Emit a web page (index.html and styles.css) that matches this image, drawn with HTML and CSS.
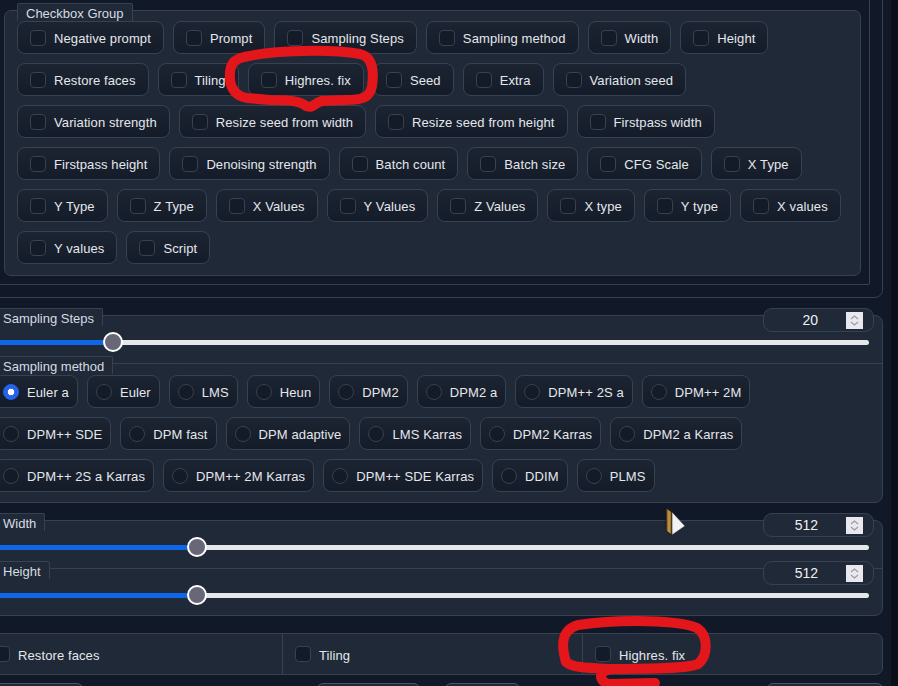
FILE: index.html
```html
<!DOCTYPE html>
<html lang="en">
<head>
    <meta charset="UTF-8">
    <meta name="viewport" content="width=device-width, initial-scale=1.0">
    <title>txt2img settings</title>
    <link rel="stylesheet" href="styles.css">
</head>
<body>
    <div class="app">

        <!-- Bloque superior: grupo de checkboxes -->
        <div class="top-area">
            <div class="panel-mid">
                <div class="block group">
                    <span class="block-label">Checkbox Group</span>
                    <div class="item-rows">
                        <div class="item-row">
                            <label class="check-item"><input type="checkbox"><span>Negative prompt</span></label>
                            <label class="check-item"><input type="checkbox"><span>Prompt</span></label>
                            <label class="check-item"><input type="checkbox"><span>Sampling Steps</span></label>
                            <label class="check-item"><input type="checkbox"><span>Sampling method</span></label>
                            <label class="check-item"><input type="checkbox"><span>Width</span></label>
                            <label class="check-item"><input type="checkbox"><span>Height</span></label>
                        </div>
                        <div class="item-row">
                            <label class="check-item"><input type="checkbox"><span>Restore faces</span></label>
                            <label class="check-item"><input type="checkbox"><span>Tiling</span></label>
                            <label class="check-item"><input type="checkbox"><span>Highres. fix</span></label>
                            <label class="check-item"><input type="checkbox"><span>Seed</span></label>
                            <label class="check-item"><input type="checkbox"><span>Extra</span></label>
                            <label class="check-item"><input type="checkbox"><span>Variation seed</span></label>
                        </div>
                        <div class="item-row">
                            <label class="check-item"><input type="checkbox"><span>Variation strength</span></label>
                            <label class="check-item"><input type="checkbox"><span>Resize seed from width</span></label>
                            <label class="check-item"><input type="checkbox"><span>Resize seed from height</span></label>
                            <label class="check-item"><input type="checkbox"><span>Firstpass width</span></label>
                        </div>
                        <div class="item-row">
                            <label class="check-item"><input type="checkbox"><span>Firstpass height</span></label>
                            <label class="check-item"><input type="checkbox"><span>Denoising strength</span></label>
                            <label class="check-item"><input type="checkbox"><span>Batch count</span></label>
                            <label class="check-item"><input type="checkbox"><span>Batch size</span></label>
                            <label class="check-item"><input type="checkbox"><span>CFG Scale</span></label>
                            <label class="check-item"><input type="checkbox"><span>X Type</span></label>
                        </div>
                        <div class="item-row">
                            <label class="check-item"><input type="checkbox"><span>Y Type</span></label>
                            <label class="check-item"><input type="checkbox"><span>Z Type</span></label>
                            <label class="check-item"><input type="checkbox"><span>X Values</span></label>
                            <label class="check-item"><input type="checkbox"><span>Y Values</span></label>
                            <label class="check-item"><input type="checkbox"><span>Z Values</span></label>
                            <label class="check-item"><input type="checkbox"><span>X type</span></label>
                            <label class="check-item"><input type="checkbox"><span>Y type</span></label>
                            <label class="check-item"><input type="checkbox"><span>X values</span></label>
                        </div>
                        <div class="item-row">
                            <label class="check-item"><input type="checkbox"><span>Y values</span></label>
                            <label class="check-item"><input type="checkbox"><span>Script</span></label>
                        </div>
                    </div>
                </div>
            </div>
        </div>

        <!-- Parte inferior: sliders y sampler -->
        <div class="lower">
            <div class="block stack">
                <div class="field slider-field">
                    <span class="block-label">Sampling Steps</span>
                    <div class="number-box"><span>20</span><i class="spinner"></i></div>
                    <div class="slider" style="--v: 14.8%"><div class="thumb"></div></div>
                </div>
                <div class="field radio-field">
                    <span class="block-label">Sampling method</span>
                    <div class="item-rows">
                        <div class="item-row">
                            <label class="radio-item"><input type="radio" name="sampler" checked><span>Euler a</span></label>
                            <label class="radio-item"><input type="radio" name="sampler"><span>Euler</span></label>
                            <label class="radio-item"><input type="radio" name="sampler"><span>LMS</span></label>
                            <label class="radio-item"><input type="radio" name="sampler"><span>Heun</span></label>
                            <label class="radio-item"><input type="radio" name="sampler"><span>DPM2</span></label>
                            <label class="radio-item"><input type="radio" name="sampler"><span>DPM2 a</span></label>
                            <label class="radio-item"><input type="radio" name="sampler"><span>DPM++ 2S a</span></label>
                            <label class="radio-item"><input type="radio" name="sampler"><span>DPM++ 2M</span></label>
                        </div>
                        <div class="item-row">
                            <label class="radio-item"><input type="radio" name="sampler"><span>DPM++ SDE</span></label>
                            <label class="radio-item"><input type="radio" name="sampler"><span>DPM fast</span></label>
                            <label class="radio-item"><input type="radio" name="sampler"><span>DPM adaptive</span></label>
                            <label class="radio-item"><input type="radio" name="sampler"><span>LMS Karras</span></label>
                            <label class="radio-item"><input type="radio" name="sampler"><span>DPM2 Karras</span></label>
                            <label class="radio-item"><input type="radio" name="sampler"><span>DPM2 a Karras</span></label>
                        </div>
                        <div class="item-row">
                            <label class="radio-item"><input type="radio" name="sampler"><span>DPM++ 2S a Karras</span></label>
                            <label class="radio-item"><input type="radio" name="sampler"><span>DPM++ 2M Karras</span></label>
                            <label class="radio-item"><input type="radio" name="sampler"><span>DPM++ SDE Karras</span></label>
                            <label class="radio-item"><input type="radio" name="sampler"><span>DDIM</span></label>
                            <label class="radio-item"><input type="radio" name="sampler"><span>PLMS</span></label>
                        </div>
                    </div>
                </div>
            </div>

            <div class="block stack">
                <div class="field slider-field">
                    <span class="block-label">Width</span>
                    <div class="number-box"><span>512</span><i class="spinner"></i></div>
                    <div class="slider" style="--v: 24.2%"><div class="thumb"></div></div>
                </div>
                <div class="field slider-field">
                    <span class="block-label">Height</span>
                    <div class="number-box"><span>512</span><i class="spinner"></i></div>
                    <div class="slider" style="--v: 24.2%"><div class="thumb"></div></div>
                </div>
            </div>

            <div class="block options">
                <label class="option-cell"><input type="checkbox"><span>Restore faces</span></label>
                <label class="option-cell"><input type="checkbox"><span>Tiling</span></label>
                <label class="option-cell"><input type="checkbox"><span>Highres. fix</span></label>
            </div>

            <div class="more-row">
                <div class="more-btn first"></div>
                <div class="more-btn second"></div>
                <div class="more-btn third"></div>
                <div class="more-btn fourth"></div>
            </div>
        </div>

        <!-- Marcas rojas dibujadas encima -->
        <svg class="marks" width="898" height="686" viewBox="0 0 898 686">
            <path d="M244 57 C275 50 330 49 360 54 C373 57 374 72 372 86 C370 98 362 100 345 100 L322 101 C313 103 314 109 306 106 C300 101 290 100 270 100 L247 98 C233 96 229 85 230 72 C231 62 236 59 244 57 Z"/>
            <path d="M566 662 C561 645 561 630 578 625 C620 619 680 620 697 628 C709 636 708 656 698 664 C682 670 640 668 612 669 C598 671 598 680 608 684 L655 683 M612 669 C590 668 572 668 566 662"/>
        </svg>

        <!-- Puntero del ratón -->
        <svg class="cursor" width="24" height="32" viewBox="0 0 24 32">
            <defs>
                <linearGradient id="gold" x1="0" x2="1">
                    <stop offset="0" stop-color="#5a3d12"/>
                    <stop offset="0.5" stop-color="#c9a04a"/>
                    <stop offset="1" stop-color="#6b4a17"/>
                </linearGradient>
            </defs>
            <polygon points="2,1 8,5 8,28 2,24" fill="url(#gold)" stroke="#1a1208" stroke-width="0.8"/>
            <polygon points="8,5 21,19 8,28" fill="#f2f2f2" stroke="#2a2a2a" stroke-width="0.6"/>
        </svg>
    </div>
</body>
</html>
```
FILE: styles.css
```css
* {
    box-sizing: border-box;
}

html, body {
    margin: 0;
    height: 100%;
    overflow: hidden;
}

body {
    background-color: #0b0f19;
    font-family: 'Liberation Sans', Arial, sans-serif;
    font-size: 13px;
    color: #e5e7eb;
}

.app {
    position: relative;
    width: 891px;
    height: 686px;
    overflow: hidden;
    background-color: #111827;
}

/* Contenedores anidados de arriba */
.top-area {
    margin: -24px 0 0 -20px;
    width: 903px;
    padding: 12px;
    border: 1px solid #374151;
    border-radius: 8px;
}

.panel-mid {
    padding: 20px 8px 8px 10px;
    border: 1px solid #374151;
    border-radius: 2px;
}

.block {
    position: relative;
    background-color: #1f2937;
    border: 1px solid #374151;
    border-radius: 7px;
}

.group {
    padding: 10px 12px 11px;
}

/* Etiqueta tipo pestaña */
.block-label {
    position: absolute;
    top: -8px;
    left: 12px;
    z-index: 2;
    padding: 2px 8px 0;
    line-height: 16px;
    height: 18px;
    color: #d7dbe2;
    background-color: #1f2937;
    border: 1px solid #374151;
    border-bottom: none;
    border-radius: 2px 2px 0 0;
}

.item-rows {
    display: flex;
    flex-direction: column;
    gap: 9px;
}

.item-row {
    display: flex;
    gap: 9px;
}

.check-item,
.radio-item {
    display: flex;
    align-items: center;
    gap: 8px;
    height: 33px;
    padding: 0 12px;
    white-space: nowrap;
    border: 1px solid #374151;
    border-radius: 8px;
    background: linear-gradient(180deg, #1c2432 0%, #141b29 100%);
}

.check-item span,
.radio-item span,
.option-cell span {
    position: relative;
    top: 1px;
    letter-spacing: 0.1px;
}

.radio-item {
    padding: 0 8px;
}

input[type="checkbox"],
input[type="radio"] {
    -webkit-appearance: none;
    appearance: none;
    flex: none;
    width: 16px;
    height: 16px;
    margin: 0;
    border: 1px solid #374151;
    border-radius: 4px;
    background-color: #131a28;
}

input[type="radio"] {
    border-radius: 50%;
}

input[type="radio"]:checked {
    border-color: #2563eb;
    background: radial-gradient(circle, #ffffff 0 3px, #2563eb 3.6px);
}

/* Parte inferior */
.lower {
    margin: 17px 0 0 -19px;
    width: 902px;
}

.lower .block + .block {
    margin-top: 17px;
}

.lower .options {
    margin-top: 16px;
}

.stack {
    border-radius: 8px;
}

.field {
    position: relative;
}

.field + .field {
    border-top: 1px solid #374151;
}

.slider-field {
    height: 47px;
    padding: 16px 13px 0 0;
}

.radio-field {
    padding: 11px 12px 10px;
}

/* Caja numérica */
.number-box {
    position: absolute;
    top: -8px;
    right: 8px;
    z-index: 2;
    display: flex;
    align-items: center;
    justify-content: flex-end;
    width: 111px;
    height: 24px;
    padding-right: 10px;
    font-size: 14px;
    color: #eef0f3;
    background-color: #1f2937;
    border: 1px solid #374151;
    border-radius: 9px;
}

.number-box span {
    margin-right: 28px;
}

.spinner {
    width: 17px;
    height: 17px;
    background-color: #e8e8ee;
    background-image: url("data:image/svg+xml,%3Csvg xmlns='http://www.w3.org/2000/svg' width='17' height='17'%3E%3Cpath d='M5 7 L8.5 4 L12 7 M5 10 L8.5 13 L12 10' fill='none' stroke='%239a9aa6' stroke-width='1.2'/%3E%3C/svg%3E");
}

/* Slider */
.slider {
    position: relative;
    height: 20px;
}

.slider::before {
    content: '';
    position: absolute;
    left: 0;
    right: 0;
    top: 8px;
    height: 5px;
    border-radius: 3px;
    background: linear-gradient(to right, #0f66e6 var(--v), #e5e7eb var(--v));
}

.thumb {
    position: absolute;
    top: 0;
    left: var(--v);
    width: 20px;
    height: 20px;
    margin-left: -10px;
    border: 2px solid #ffffff;
    border-radius: 50%;
    background-color: #676777;
}

/* Fila de opciones */
.options {
    display: grid;
    grid-template-columns: repeat(3, 1fr);
    height: 42px;
}

.option-cell {
    display: flex;
    align-items: center;
    gap: 8px;
    padding-left: 12px;
}

.option-cell + .option-cell {
    border-left: 1px solid #374151;
}

.more-row {
    display: flex;
    margin-top: 8px;
}

.more-btn {
    height: 12px;
    background-color: #1f2937;
    border: 1px solid #4b5563;
    border-radius: 6px;
}

.more-btn.first { width: 102px; }
.more-btn.second { width: 103px; margin-left: 234px; }
.more-btn.third { width: 75px; margin-left: 25px; }
.more-btn.fourth { width: 116px; margin-left: 247px; }

/* Capas superpuestas */
.marks {
    position: absolute;
    top: 0;
    left: 0;
    pointer-events: none;
}

.marks path {
    fill: none;
    stroke: #e3161b;
    stroke-width: 10;
    stroke-linecap: round;
    stroke-linejoin: round;
}

.cursor {
    position: absolute;
    left: 664px;
    top: 507px;
}
```
